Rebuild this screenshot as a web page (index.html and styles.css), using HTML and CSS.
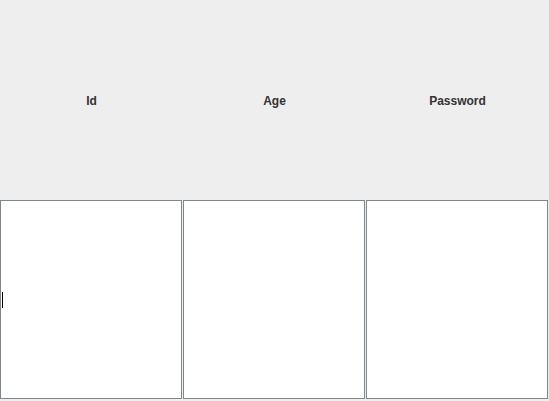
FILE: index.html
```html
<!DOCTYPE html>
<html>
<head>
<meta charset="utf-8">
<link rel="stylesheet" href="styles.css">
</head>
<body>
<div class="form">
  <div class="labels">
    <div class="label">Id</div>
    <div class="label">Age</div>
    <div class="label">Password</div>
  </div>
  <div class="fields">
    <div class="cell"><div class="area first"><span class="caret"></span></div></div>
    <div class="cell"><div class="area"></div></div>
    <div class="cell"><div class="area"></div></div>
  </div>
</div>
</body>
</html>
```

FILE: styles.css
```css
html, body {
  margin: 0;
  padding: 0;
  background: #eeeeee;
  width: 549px;
  height: 401px;
  overflow: hidden;
}
.form {
  font-family: "Liberation Sans", Arial, sans-serif;
}
.labels {
  display: grid;
  grid-template-columns: 183px 183px 183px;
  height: 200px;
}
.label {
  display: flex;
  align-items: center;
  justify-content: center;
  font-size: 12px;
  font-weight: bold;
  color: #333333;
  padding-top: 1px;
}
.fields {
  display: grid;
  grid-template-columns: 183px 183px 183px;
  height: 199px;
}
.cell {
  padding-right: 1px;
}
.area {
  box-sizing: border-box;
  height: 199px;
  background: #ffffff;
  border: 1px solid #7c878f;
  display: flex;
  align-items: center;
}
.caret {
  display: block;
  width: 1px;
  height: 16px;
  background: #000000;
  margin-left: 1px;
}
```
